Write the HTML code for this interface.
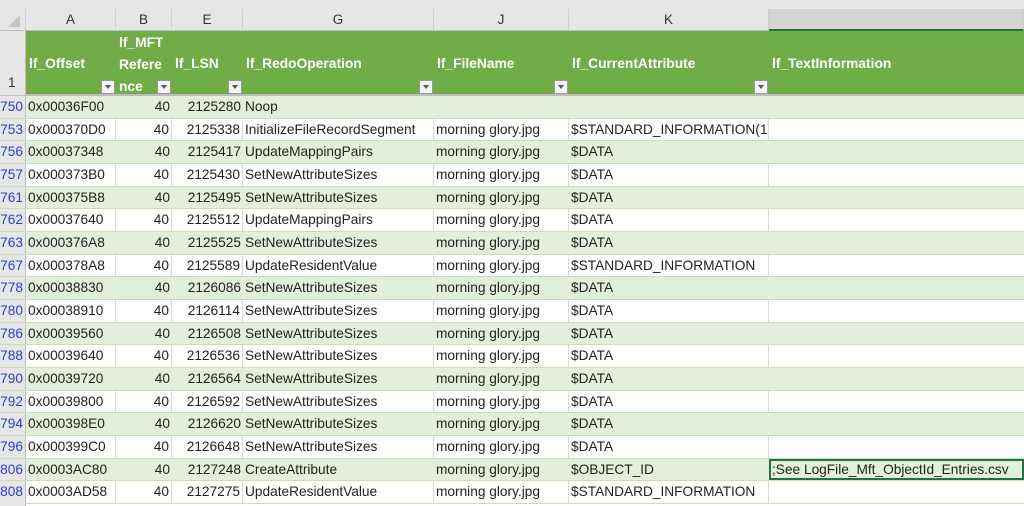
<!DOCTYPE html><html><head><style>
*{margin:0;padding:0;box-sizing:border-box}
html,body{width:1024px;height:506px;overflow:hidden}
body{background:#fff;font-family:"Liberation Sans",Arial,sans-serif;font-size:13.7px;color:#222;position:relative}
.a{position:absolute;white-space:nowrap;overflow:hidden}
.ch{top:9px;height:22px;background:#e6e6e6;border-right:1px solid #cfcfcf;border-bottom:1px solid #bdbdbd;text-align:center;line-height:22px;color:#333;font-size:13.5px}
.h{color:#fff;font-weight:bold;font-size:13.8px}
.fb{position:absolute;width:14px;height:14px;background:#f4f4f4;border:1px solid #999;top:80px}
.fb:after{content:"";position:absolute;left:3px;top:4px;border-left:3px solid transparent;border-right:3px solid transparent;border-top:4px solid #555}
.row{position:absolute;left:0;width:1024px;border-bottom:1px solid #c6e0b4}
.g{background:#e2efda}
.rn{position:absolute;left:0;width:26px;height:100%;background:#e6e6e6;border-right:1px solid #bdbdbd;color:#2b3fd6;text-align:right;padding-right:2px}
.c{position:absolute;top:0;height:100%;padding-left:2px;overflow:hidden;white-space:nowrap}
.w .c{border-right:1px solid #dadada}
.r{text-align:right;padding-right:2px}
</style></head><body>
<div class="a" style="left:0;top:0;width:1024px;height:9px;background:#e6e6e6"></div>
<div class="a ch" style="left:0;width:26px;"><svg width="26" height="22"><polygon points="20,18 20,6 8,18" fill="#c4c4c4"/></svg></div>
<div class="a ch" style="left:26px;width:90px">A</div>
<div class="a ch" style="left:116px;width:56px">B</div>
<div class="a ch" style="left:172px;width:71px">E</div>
<div class="a ch" style="left:243px;width:191px">G</div>
<div class="a ch" style="left:434px;width:135px">J</div>
<div class="a ch" style="left:569px;width:200px">K</div>
<div class="a ch" style="left:769px;width:255px;background:#d4d4d4;border-bottom:2px solid #217346"></div>
<div class="a" style="left:0;top:31px;width:26px;height:65px;background:#e6e6e6;border-right:1px solid #bdbdbd;border-bottom:1px solid #bdbdbd;color:#333;padding:44px 0 0 8px">1</div>
<div class="a" style="left:26px;top:31px;width:998px;height:65px;background:#70ad47;border-bottom:2px solid #bdbdbd"></div>
<div class="a h" style="left:29px;top:56px">lf_Offset</div>
<div class="a h" style="left:119px;top:32px;line-height:22px">lf_MFT<br>Refere<br>nce</div>
<div class="a h" style="left:175px;top:56px">lf_LSN</div>
<div class="a h" style="left:246px;top:56px">lf_RedoOperation</div>
<div class="a h" style="left:437px;top:56px">lf_FileName</div>
<div class="a h" style="left:572px;top:56px">lf_CurrentAttribute</div>
<div class="a h" style="left:772px;top:56px">lf_TextInformation</div>
<div class="fb" style="left:101px"></div>
<div class="fb" style="left:157px"></div>
<div class="fb" style="left:228px"></div>
<div class="fb" style="left:419px"></div>
<div class="fb" style="left:554px"></div>
<div class="fb" style="left:754px"></div>
<div id="rows"></div>
<script>
var d=[["750","0x00036F00","2125280","Noop","",""],
["753","0x000370D0","2125338","InitializeFileRecordSegment","morning glory.jpg","$STANDARD_INFORMATION(1)"],
["756","0x00037348","2125417","UpdateMappingPairs","morning glory.jpg","$DATA"],
["757","0x000373B0","2125430","SetNewAttributeSizes","morning glory.jpg","$DATA"],
["761","0x000375B8","2125495","SetNewAttributeSizes","morning glory.jpg","$DATA"],
["762","0x00037640","2125512","UpdateMappingPairs","morning glory.jpg","$DATA"],
["763","0x000376A8","2125525","SetNewAttributeSizes","morning glory.jpg","$DATA"],
["767","0x000378A8","2125589","UpdateResidentValue","morning glory.jpg","$STANDARD_INFORMATION"],
["778","0x00038830","2126086","SetNewAttributeSizes","morning glory.jpg","$DATA"],
["780","0x00038910","2126114","SetNewAttributeSizes","morning glory.jpg","$DATA"],
["786","0x00039560","2126508","SetNewAttributeSizes","morning glory.jpg","$DATA"],
["788","0x00039640","2126536","SetNewAttributeSizes","morning glory.jpg","$DATA"],
["790","0x00039720","2126564","SetNewAttributeSizes","morning glory.jpg","$DATA"],
["792","0x00039800","2126592","SetNewAttributeSizes","morning glory.jpg","$DATA"],
["794","0x000398E0","2126620","SetNewAttributeSizes","morning glory.jpg","$DATA"],
["796","0x000399C0","2126648","SetNewAttributeSizes","morning glory.jpg","$DATA"],
["806","0x0003AC80","2127248","CreateAttribute","morning glory.jpg","$OBJECT_ID"],
["808","0x0003AD58","2127275","UpdateResidentValue","morning glory.jpg","$STANDARD_INFORMATION"]];
var h="";
for(var i=0;i<d.length;i++){var t=Math.round(96+i*22.67),b=Math.round(96+(i+1)*22.67),r=d[i];
var hh=b-t,lh=(hh-1)+"px";
h+='<div class="row '+(i%2==0?'g':'w')+'" style="top:'+t+'px;height:'+hh+'px;line-height:'+lh+'">'+
'<div class="rn">'+r[0]+'</div>'+
'<div class="c" style="left:26px;width:90px">'+r[1]+'</div>'+
'<div class="c r" style="left:116px;width:56px">40</div>'+
'<div class="c r" style="left:172px;width:71px">'+r[2]+'</div>'+
'<div class="c" style="left:243px;width:191px">'+r[3]+'</div>'+
'<div class="c" style="left:434px;width:135px">'+r[4]+'</div>'+
'<div class="c" style="left:569px;width:200px">'+r[5]+'</div>'+
(r[0]=="806"?'<div class="c" style="left:769px;width:255px;border:2px solid #217346;padding-left:1px;line-height:'+(hh-4)+'px">;See LogFile_Mft_ObjectId_Entries.csv</div>':'')+
'</div>';}
h+='<div class="row" style="top:503px;height:3px;border:0"><div class="rn"></div></div>';
document.getElementById("rows").innerHTML=h;
</script>
</body></html>
